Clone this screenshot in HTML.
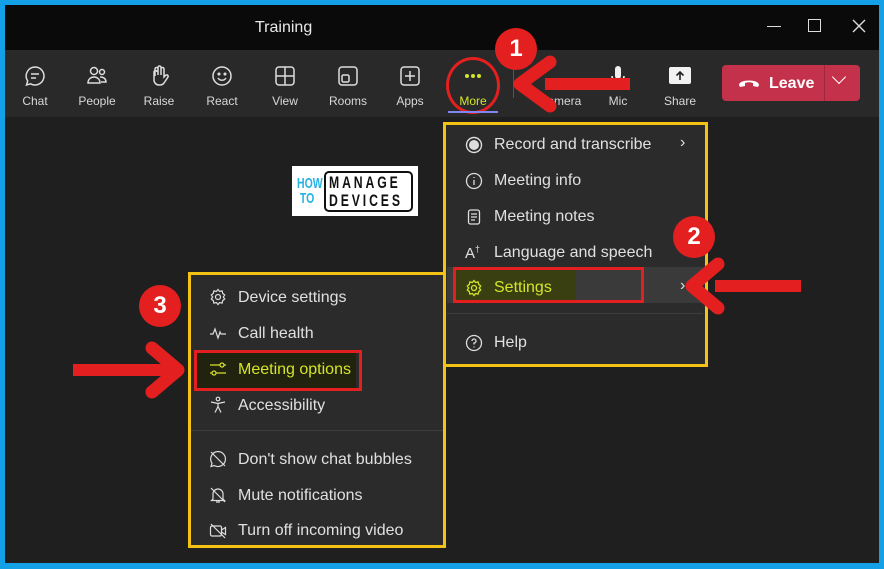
<!DOCTYPE html>
<html><head><style>
*{margin:0;padding:0;box-sizing:border-box}
body{width:884px;height:569px;background:#14a0e6;position:relative;overflow:hidden;font-family:"Liberation Sans",sans-serif;color:#e6e6e6}
.a{position:absolute}
.win{left:5px;top:5px;width:874px;height:558px;background:#1f1f1f}
.title{left:5px;top:5px;width:874px;height:45px;background:#0a0a0a}
.tb{left:5px;top:50px;width:874px;height:67px;background:#292929}
.btn{position:absolute;top:60px;width:60px;text-align:center;font-size:12px;color:#d8d8d8}
.btn svg{display:block;margin:4px auto 6px}
.menu{background:#2b2b2b}
.it{position:absolute;font-size:16px;color:#e0e0e0;white-space:nowrap}
.ic{position:absolute;width:18px;height:18px}
.badge{position:absolute;width:42px;height:42px;border-radius:50%;background:#e3201f;color:#fff;font-weight:bold;font-size:24px;text-align:center;line-height:42px}
</style></head><body>
<div class="a win"></div>
<div class="a title"></div>
<div class="a" style="left:255px;top:19px;font-size:16px;color:#e8e8e8">Training</div>
<div class="a" style="left:767px;top:26px;width:14px;height:1px;background:#ddd"></div>
<div class="a" style="left:808px;top:19px;width:13px;height:13px;border:1.5px solid #ddd"></div>
<svg class="a" style="left:852px;top:19px" width="14" height="14" viewBox="0 0 14 14"><path d="M1 1l12 12M13 1 1 13" stroke="#ddd" stroke-width="1.4"/></svg>
<div class="a tb"></div>

<div class="btn" style="left:5px"><svg width="24" height="24" viewBox="0 0 24 24" fill="none" stroke="#ddd" stroke-width="1.5"><path d="M12 3a9 9 0 1 1-4.5 16.8L3.5 21l1.2-4A9 9 0 0 1 12 3z"/><path d="M8 10h8M8 14h5"/></svg>Chat</div>
<div class="btn" style="left:67px"><svg width="24" height="24" viewBox="0 0 24 24" fill="none" stroke="#ddd" stroke-width="1.5"><circle cx="9" cy="7" r="3.5"/><circle cx="17" cy="8" r="2.5"/><path d="M3 19c0-4 3-6 6-6s6 2 6 6zM15 13c4 0 6 2 6 5h-5"/></svg>People</div>
<div class="btn" style="left:129px"><svg width="24" height="24" viewBox="0 0 24 24" fill="none" stroke="#ddd" stroke-width="1.5"><path d="M8 12V5a1.5 1.5 0 0 1 3 0v6V3.5a1.5 1.5 0 0 1 3 0V11V5a1.5 1.5 0 0 1 3 0v8l2-2a1.5 1.5 0 0 1 2 2l-4 6a5 5 0 0 1-4 2h-1a5 5 0 0 1-5-5V8a1.5 1.5 0 0 1 3 0"/></svg>Raise</div>
<div class="btn" style="left:192px"><svg width="24" height="24" viewBox="0 0 24 24" fill="none" stroke="#ddd" stroke-width="1.5"><circle cx="12" cy="12" r="9"/><path d="M8 14c2 3 6 3 8 0"/><circle cx="9" cy="10" r=".8" fill="#ddd"/><circle cx="15" cy="10" r=".8" fill="#ddd"/></svg>React</div>
<div class="btn" style="left:255px"><svg width="24" height="24" viewBox="0 0 24 24" fill="none" stroke="#ddd" stroke-width="1.5"><rect x="3" y="3" width="18" height="18" rx="3"/><path d="M12 3v18M3 12h18"/></svg>View</div>
<div class="btn" style="left:318px"><svg width="24" height="24" viewBox="0 0 24 24" fill="none" stroke="#ddd" stroke-width="1.5"><rect x="3" y="3" width="18" height="18" rx="3"/><rect x="6" y="11" width="7" height="7" rx="1.5"/></svg>Rooms</div>
<div class="btn" style="left:380px"><svg width="24" height="24" viewBox="0 0 24 24" fill="none" stroke="#ddd" stroke-width="1.5"><rect x="3" y="3" width="18" height="18" rx="3"/><path d="M12 7v10M7 12h10"/></svg>Apps</div>
<div class="btn" style="left:443px;color:#d4e52a"><svg width="24" height="24" viewBox="0 0 24 24" fill="#d4e52a"><circle cx="6" cy="12" r="2"/><circle cx="12" cy="12" r="2"/><circle cx="18" cy="12" r="2"/></svg>More</div>
<div class="a" style="left:446px;top:57px;width:54px;height:57px;border:3px solid #e3201f;border-radius:50%"></div>
<div class="a" style="left:448px;top:111px;width:50px;height:2px;background:#7f85f5"></div>
<div class="a" style="left:513px;top:68px;width:1px;height:30px;background:#555"></div>
<div class="btn" style="left:530px"><svg width="24" height="24"></svg>Camera</div>
<div class="btn" style="left:588px"><svg width="24" height="24" viewBox="0 0 24 24"><rect x="9" y="2" width="6" height="13" rx="3" fill="#eee"/><path d="M6 12a6 6 0 0 0 12 0M12 18v3" stroke="#eee" stroke-width="1.5" fill="none"/></svg>Mic</div>
<div class="btn" style="left:650px"><svg width="24" height="24" viewBox="0 0 24 24"><rect x="1" y="3" width="22" height="17" rx="2" fill="#f2f2f2"/><path d="M12 16V8M8.5 11.5 12 8l3.5 3.5" stroke="#222" stroke-width="1.6" fill="none"/></svg>Share</div>
<div class="a" style="left:722px;top:65px;width:138px;height:36px;background:#c4314b;border-radius:4px"></div>
<div class="a" style="left:824px;top:65px;width:1px;height:36px;background:#a0283e"></div>
<svg class="a" style="left:737px;top:76px" width="24" height="12" viewBox="0 0 24 12"><path d="M2 9c0-6 20-6 20 0l-1 2-5-1v-3c-3-1-5-1-8 0v3l-5 1z" fill="#fff"/></svg>
<div class="a" style="left:769px;top:75px;font-size:16px;font-weight:bold;color:#fff">Leave</div>
<div class="a" style="left:834px;top:72px;width:10px;height:10px;border-right:1.5px solid #fff;border-bottom:1.5px solid #fff;transform:rotate(45deg)"></div>
<!-- arrow 1 -->
<div class="a" style="left:545px;top:78px;width:85px;height:12px;background:#e3201f"></div>
<svg class="a" style="left:510px;top:54px" width="60" height="60" viewBox="0 0 60 60"><path d="M40 8 10 30l30 22" stroke="#e3201f" stroke-width="13" fill="none" stroke-linecap="round" stroke-linejoin="round"/></svg>
<div class="badge" style="left:495px;top:28px">1</div>

<!-- logo -->
<div class="a" style="left:292px;top:166px;width:126px;height:50px;background:#fff"></div>
<div class="a" style="left:297px;top:176px;font-size:15px;font-weight:bold;color:#24b1e6;line-height:15px;transform:scaleX(.7);transform-origin:left">HOW<br>&nbsp;TO</div>
<div class="a" style="left:324px;top:171px;width:89px;height:41px;border:2px solid #111;border-radius:5px"></div>
<div class="a" style="left:329px;top:174px;font-size:17px;font-weight:bold;color:#111;line-height:18px;letter-spacing:4px;transform:scaleX(.72);transform-origin:left">MANAGE<br>DEVICES</div>

<!-- right menu -->
<div class="a menu" style="left:445px;top:124px;width:260px;height:240px"></div>
<div class="a" style="left:443px;top:122px;width:265px;height:245px;border:3px solid #f3c215"></div>
<div class="a" style="left:447px;top:267px;width:256px;height:36px;background:#3a3a3a"></div>
<div class="a" style="left:456px;top:267px;width:120px;height:36px;background:#3a3f12"></div>
<div class="a" style="left:453px;top:267px;width:191px;height:36px;border:3px solid #e3201f"></div>
<div class="a" style="left:447px;top:313px;width:256px;height:1px;background:#3e3e3e"></div>
<svg class="ic" style="left:465px;top:136px" viewBox="0 0 18 18"><circle cx="9" cy="9" r="7.5" fill="none" stroke="#ddd" stroke-width="1.4"/><circle cx="9" cy="9" r="5" fill="#ddd"/></svg>
<div class="it" style="left:494px;top:136px">Record and transcribe</div>
<div class="it" style="left:680px;top:134px">›</div>
<svg class="ic" style="left:465px;top:172px" viewBox="0 0 18 18" fill="none" stroke="#ddd" stroke-width="1.3"><circle cx="9" cy="9" r="7.5"/><path d="M9 8v5M9 5v1"/></svg>
<div class="it" style="left:494px;top:172px">Meeting info</div>
<svg class="ic" style="left:465px;top:208px" viewBox="0 0 18 18" fill="none" stroke="#ddd" stroke-width="1.3"><rect x="3.5" y="2" width="11" height="14" rx="2"/><path d="M6 6h6M6 9h6M6 12h4"/></svg>
<div class="it" style="left:494px;top:208px">Meeting notes</div>
<div class="it" style="left:465px;top:244px;font-size:15px">A<sup style="font-size:9px">†</sup></div>
<div class="it" style="left:494px;top:244px">Language and speech</div>
<svg class="ic" style="left:465px;top:279px" viewBox="0 0 18 18" fill="none" stroke="#d4e52a" stroke-width="1.3"><circle cx="9" cy="9" r="2.5"/><path d="M9 1.5l1.6 2 2.5-.6.6 2.5 2 1.6-1.4 2 1.4 2-2 1.6-.6 2.5-2.5-.6L9 16.5l-1.6-2-2.5.6-.6-2.5-2-1.6 1.4-2-1.4-2 2-1.6.6-2.5 2.5.6z"/></svg>
<div class="it" style="left:494px;top:279px;color:#d4e52a">Settings</div>
<div class="it" style="left:680px;top:277px">›</div>
<svg class="ic" style="left:465px;top:334px" viewBox="0 0 18 18" fill="none" stroke="#ddd" stroke-width="1.3"><circle cx="9" cy="9" r="7.5"/><path d="M7 7a2 2 0 1 1 2 2v1.5M9 12.5v1"/></svg>
<div class="it" style="left:494px;top:334px">Help</div>
<div class="badge" style="left:673px;top:216px">2</div>
<div class="a" style="left:715px;top:280px;width:86px;height:12px;background:#e3201f"></div>
<svg class="a" style="left:680px;top:256px" width="60" height="60" viewBox="0 0 60 60"><path d="M38 8 12 30l26 22" stroke="#e3201f" stroke-width="13" fill="none" stroke-linecap="round" stroke-linejoin="round"/></svg>

<!-- left submenu -->
<div class="a menu" style="left:190px;top:274px;width:254px;height:272px"></div>
<div class="a" style="left:188px;top:272px;width:258px;height:276px;border:3px solid #f3c215"></div>
<div class="a" style="left:191px;top:430px;width:252px;height:1px;background:#3e3e3e"></div>
<div class="a" style="left:196px;top:352px;width:160px;height:37px;background:#22230e"></div>
<div class="a" style="left:194px;top:350px;width:168px;height:41px;border:3px solid #e3201f"></div>
<svg class="ic" style="left:209px;top:288px" viewBox="0 0 18 18" fill="none" stroke="#ddd" stroke-width="1.2"><circle cx="9" cy="9" r="2.5"/><path d="M9 1.5l1.6 2 2.5-.6.6 2.5 2 1.6-1.4 2 1.4 2-2 1.6-.6 2.5-2.5-.6L9 16.5l-1.6-2-2.5.6-.6-2.5-2-1.6 1.4-2-1.4-2 2-1.6.6-2.5 2.5.6z"/></svg>
<div class="it" style="left:238px;top:289px">Device settings</div>
<svg class="ic" style="left:209px;top:324px" viewBox="0 0 18 18" fill="none" stroke="#ddd" stroke-width="1.2"><path d="M1 10h3l2-5 3 9 2-6 1 2h5"/></svg>
<div class="it" style="left:238px;top:325px">Call health</div>
<svg class="ic" style="left:209px;top:360px" viewBox="0 0 18 18" fill="none" stroke="#d4e52a" stroke-width="1.2"><path d="M1 5h10M15 5h2M1 13h2M7 13h10"/><circle cx="13" cy="5" r="2"/><circle cx="5" cy="13" r="2"/></svg>
<div class="it" style="left:238px;top:361px;color:#d4e52a">Meeting options</div>
<svg class="ic" style="left:209px;top:396px" viewBox="0 0 18 18" fill="none" stroke="#ddd" stroke-width="1.2"><circle cx="9" cy="3" r="1.8"/><path d="M2 6l7 1.5L16 6M9 7.5v3l-3 6M9 10.5l3 6"/></svg>
<div class="it" style="left:238px;top:397px">Accessibility</div>
<svg class="ic" style="left:209px;top:450px" viewBox="0 0 18 18" fill="none" stroke="#ddd" stroke-width="1.2"><path d="M9 1.5a7.5 7.5 0 1 1-3.8 14L2 16.5l1-3.3A7.5 7.5 0 0 1 9 1.5zM2 2l14 14"/></svg>
<div class="it" style="left:238px;top:451px">Don't show chat bubbles</div>
<svg class="ic" style="left:209px;top:486px" viewBox="0 0 18 18" fill="none" stroke="#ddd" stroke-width="1.2"><path d="M4 13V8a5 5 0 0 1 10 0v5l1.5 1.5h-13zM7 16h4M2 2l14 14"/></svg>
<div class="it" style="left:238px;top:487px">Mute notifications</div>
<svg class="ic" style="left:209px;top:522px" viewBox="0 0 18 18" fill="none" stroke="#ddd" stroke-width="1.2"><rect x="1.5" y="4" width="11" height="10" rx="1.5"/><path d="M12.5 8l4-2.5v7l-4-2.5M2 2l14 14"/></svg>
<div class="it" style="left:238px;top:522px">Turn off incoming video</div>
<div class="badge" style="left:139px;top:285px">3</div>
<div class="a" style="left:73px;top:364px;width:100px;height:12px;background:#e3201f"></div>
<svg class="a" style="left:128px;top:340px" width="60" height="60" viewBox="0 0 60 60"><path d="M24 8l26 22-26 22" stroke="#e3201f" stroke-width="13" fill="none" stroke-linecap="round" stroke-linejoin="round"/></svg>
</body></html>
